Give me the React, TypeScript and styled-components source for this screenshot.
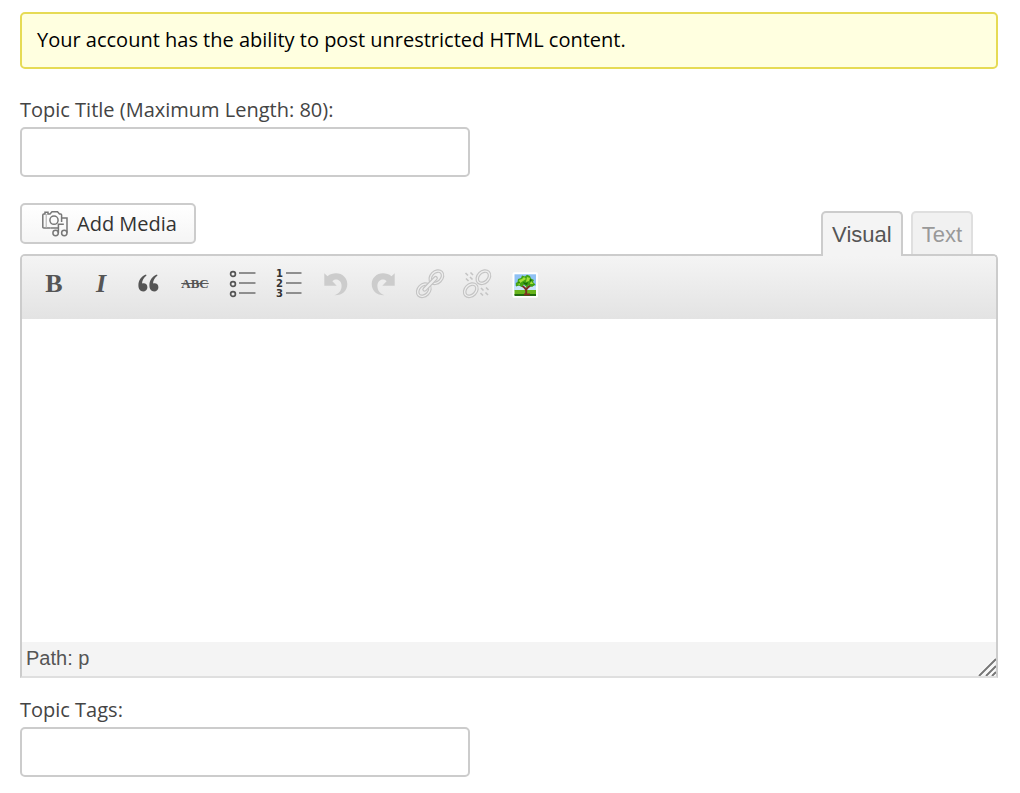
import React, { useState } from "react";
import styled, { createGlobalStyle, css } from "styled-components";

const GlobalStyle = createGlobalStyle`
  *, *::before, *::after { box-sizing: border-box; }
  body {
    margin: 0;
    background: #fff;
    color: #444;
    font-family: "Open Sans", "Noto Sans", sans-serif;
    font-size: 20px;
    line-height: 30px;
  }
`;

const Form = styled.form`
  padding: 12px 22px 16px 20px;
`;

const Notice = styled.p`
  margin: 0 0 26px;
  padding: 11px 15px 12px;
  border: 2px solid #e6db55;
  border-radius: 5px;
  background: #ffffe0;
  color: #000;
`;

const Field = styled.div`
  display: flex;
  flex-direction: column;
  align-items: flex-start;
  gap: 2px;
`;

const TextInput = styled.input`
  width: 46%;
  height: 50px;
  padding: 0 12px;
  border: 2px solid #ccc;
  border-radius: 5px;
  background: #fff;
  color: inherit;
  font: inherit;
`;

const EditorHeader = styled.div`
  display: flex;
  justify-content: space-between;
  align-items: flex-start;
  margin-top: 26px;
`;

const MediaButton = styled.button`
  display: flex;
  align-items: center;
  gap: 9px;
  height: 41px;
  margin-bottom: 10px;
  padding: 0 17px 0 20px;
  border: 2px solid #ccc;
  border-radius: 5px;
  background: linear-gradient(#fff, #f5f5f5);
  color: #333;
  font: inherit;
  cursor: pointer;
`;

const Tabs = styled.div`
  display: flex;
  align-self: flex-end;
  gap: 8px;
  padding-right: 25px;
`;

const Tab = styled.button<{ $active: boolean }>`
  height: 43px;
  padding: 2px 9px 0;
  border: 2px solid #dfdfdf;
  border-bottom: 0;
  border-radius: 5px 5px 0 0;
  background: #f1f1f1;
  color: #999;
  font: 22px/38px "Liberation Sans", Arial, sans-serif;
  cursor: pointer;
  ${(p) =>
    p.$active &&
    css`
      position: relative;
      z-index: 1;
      height: 45px;
      margin-bottom: -2px;
      padding-bottom: 2px;
      border-color: #ccc;
      background: #f4f4f4;
      color: #555;
    `}
`;

const Editor = styled.section`
  position: relative;
  margin-bottom: 17px;
  border: 2px solid #ccc;
  border-bottom-color: #dfdfdf;
  border-radius: 5px 5px 0 0;
`;

const Toolbar = styled.div`
  display: flex;
  gap: 7px;
  padding: 8px 12px 15px;
  border-radius: 3px 3px 0 0;
  background: linear-gradient(#f4f4f4, #e3e3e3);
`;

const ToolButton = styled.button`
  display: flex;
  align-items: center;
  justify-content: center;
  width: 40px;
  height: 40px;
  padding: 0;
  border: 0;
  background: none;
  color: #555;
  font: bold 26px/40px "Liberation Serif", "Times New Roman", serif;
  cursor: pointer;
  &:disabled { cursor: default; }
`;

const Italic = styled.em`
  font-style: italic;
`;

const Strike = styled.s`
  font-size: 13px;
`;

const Content = styled.textarea`
  display: block;
  width: 100%;
  height: 323px;
  padding: 16px;
  border: 0;
  outline: 0;
  resize: none;
  background: #fff;
  color: #333;
  font: inherit;
`;

const StatusBar = styled.div`
  padding: 0 4px 2px;
  background: #f4f4f4;
  color: #555;
  font: 20px/32px "Liberation Sans", Arial, sans-serif;
`;

const Grip = styled.svg`
  position: absolute;
  right: 0;
  bottom: 0;
  cursor: se-resize;
`;

const IconSvg = styled.svg`
  overflow: visible;
`;

const Icon = ({ children }: { children: React.ReactNode }) => (
  <IconSvg width="28" height="28" viewBox="0 0 28 28" fill="none" aria-hidden="true">
    {children}
  </IconSvg>
);

const MediaIcon = () => (
  <svg width="26" height="26" viewBox="0 0 26 26" fill="none" stroke="#777" strokeWidth="1.5" aria-hidden="true">
    <path d="M8.5 17H1.8Q.8 17 .8 16V4Q.8 3 1.8 3H3V1.2H6V3H8L10 .8H15.5L17.5 3H18.6Q19.6 3 19.6 4V11" />
    <path d="M4.2 3V17" strokeWidth="1" stroke="#aaa" />
    <circle cx="12" cy="9.2" r="4.1" />
    <path d="M19.6 7H25V21.8M16.4 22V13.2H21.8M8.5 17H16.4" />
    <circle cx="13.6" cy="22" r="2.7" />
    <circle cx="22.3" cy="22" r="2.7" />
  </svg>
);

const QuoteMark = "M11 3.5C6 5.5 3.4 9.4 3.4 14.2C3.4 18.2 5.3 20.4 8.1 20.4C10.6 20.4 12.4 18.7 12.4 16.2C12.4 13.8 10.8 12.2 8.6 12.2C7.9 12.2 7.4 12.3 7 12.5C7.2 9.5 8.6 6.5 11.5 4.4Z";

const QuoteIcon = () => (
  <Icon>
    <g fill="#555">
      <path d={QuoteMark} transform="translate(1 1)" />
      <path d={QuoteMark} transform="translate(12 1)" />
    </g>
  </Icon>
);

const rows = [3, 13, 23];

const BulletListIcon = () => (
  <Icon>
    {rows.map((y) => (
      <g key={y} stroke="#555">
        <circle cx="5" cy={y + 1} r="2.4" strokeWidth="1.7" />
        <path d={`M11 ${y}H27.5`} stroke="#777" strokeWidth="1.6" />
      </g>
    ))}
  </Icon>
);

const NumberListIcon = () => (
  <Icon>
    {rows.map((y, i) => (
      <g key={y}>
        <text x="1" y={y + 4} fill="#333" fontFamily="DejaVu Sans, sans-serif" fontWeight="bold" fontSize="10">
          {i + 1}
        </text>
        <path d={`M11 ${y}H26.5`} stroke="#777" strokeWidth="1.6" />
      </g>
    ))}
  </Icon>
);

const TurnArrow =
  "M2.3 3.3L5.5 6.2C8 4 11 3.2 14 3.2C20.5 3.2 25.3 8 25.3 14C25.3 21 20 25.5 12.5 25.2C17 23.5 19.6 20.5 19.6 16C19.6 12 17 9.6 14 9.6C12.5 9.6 11.3 10.2 10.4 11.2L14.7 15.7H2.3Z";

const UndoIcon = () => (
  <Icon>
    <path d={TurnArrow} fill="#ccc" />
  </Icon>
);

const RedoIcon = () => (
  <Icon>
    <path d={TurnArrow} fill="#ccc" transform="matrix(-1 0 0 1 28 0)" />
  </Icon>
);

const ChainRing = ({ x, y }: { x: number; y: number }) => (
  <g transform={`translate(${x} ${y}) rotate(-45)`}>
    <ellipse rx="7" ry="5.2" stroke="#c4c4c4" strokeWidth="3.6" />
    <ellipse rx="7" ry="5.2" stroke="#eee" strokeWidth="1.3" />
  </g>
);

const LinkIcon = () => (
  <Icon>
    <ChainRing x={7.8} y={20.2} />
    <ChainRing x={20.4} y={7.2} />
    <path d="M8.6 19.4L19.6 8.2" stroke="#c4c4c4" strokeWidth="4.6" strokeLinecap="round" />
    <path d="M8.6 19.4L19.6 8.2" stroke="#eee" strokeWidth="2.2" strokeLinecap="round" />
  </Icon>
);

const UnlinkIcon = () => (
  <Icon>
    <ChainRing x={7.8} y={20.2} />
    <ChainRing x={20.4} y={7.2} />
    <path
      d="M2.5 3L5 5.5M7.5 2.5L10 5M3 8.5L5.5 11M7 7L9.5 9.5M18 18L20.5 20.5M23 17.5L25.5 20M17.5 23L20 25.5M22.5 22.5L25 25"
      stroke="#c4c4c4"
      strokeWidth="1.6"
    />
  </Icon>
);

const PictureIcon = () => (
  <Icon>
    <rect x="2.5" y="2.3" width="25.4" height="25.4" rx="1.5" fill="#fff" />
    <rect x="4.5" y="4.3" width="21.5" height="16" fill="#8fc1f4" />
    <rect x="4.5" y="16" width="21.5" height="5" fill="#c9e3fb" />
    <rect x="4.5" y="20" width="21.5" height="5" fill="#69b51e" />
    <rect x="4.5" y="24" width="21.5" height="2" fill="#236b10" />
    <path d="M16 24.5C17 20 16 18 11.5 15.5M16 20C17 17 19 16 22 14.5M14 24.5H20" stroke="#7d2f22" strokeWidth="2" />
    <path
      d="M8 9L11 8L12 5.5L15 6.5L17 4.8L20 6L21 8.5L24 10L23 12L25.5 14.5L22 17L18.5 15L17 17.5L14 14.5L11.5 17L9 15.5L6 16.5L5.8 13L7.5 12Z"
      fill="#43a313"
    />
    <path d="M9 10L12 9L14 7L16 9L13 11L10 13ZM17 7L20 8L19 11L16 12ZM21 11L23.5 14L20 14ZM7 14L10 13.5L10 15Z" fill="#a5df3b" />
    <path d="M13 12L16 13L18 12L17 15L14 14ZM20 9L22 10L20 12ZM8 12L10 12L9 13Z" fill="#176b0c" />
  </Icon>
);

const tools: { label: string; icon: React.ReactNode; disabled?: boolean }[] = [
  { label: "Bold", icon: "B" },
  { label: "Italic", icon: <Italic>I</Italic> },
  { label: "Blockquote", icon: <QuoteIcon /> },
  { label: "Strikethrough", icon: <Strike>ABC</Strike> },
  { label: "Unordered list", icon: <BulletListIcon /> },
  { label: "Ordered list", icon: <NumberListIcon /> },
  { label: "Undo", icon: <UndoIcon />, disabled: true },
  { label: "Redo", icon: <RedoIcon />, disabled: true },
  { label: "Insert link", icon: <LinkIcon />, disabled: true },
  { label: "Unlink", icon: <UnlinkIcon />, disabled: true },
  { label: "Insert image", icon: <PictureIcon /> },
];

export default function App() {
  const [mode, setMode] = useState("Visual");

  return (
    <>
      <GlobalStyle />
      <Form onSubmit={(e) => e.preventDefault()}>
        <Notice>Your account has the ability to post unrestricted HTML content.</Notice>

        <Field>
          <label htmlFor="topic-title">Topic Title (Maximum Length: 80):</label>
          <TextInput id="topic-title" type="text" maxLength={80} />
        </Field>

        <EditorHeader>
          <MediaButton type="button">
            <MediaIcon />
            Add Media
          </MediaButton>
          <Tabs role="tablist">
            {["Visual", "Text"].map((name) => (
              <Tab
                key={name}
                type="button"
                role="tab"
                aria-selected={mode === name}
                $active={mode === name}
                onClick={() => setMode(name)}
              >
                {name}
              </Tab>
            ))}
          </Tabs>
        </EditorHeader>

        <Editor>
          <Toolbar role="toolbar" aria-label="Formatting">
            {tools.map((tool) => (
              <ToolButton key={tool.label} type="button" aria-label={tool.label} disabled={tool.disabled}>
                {tool.icon}
              </ToolButton>
            ))}
          </Toolbar>
          <Content aria-label="Topic content" />
          <StatusBar>Path: p</StatusBar>
          <Grip width="18" height="18" viewBox="0 0 18 18" aria-hidden="true">
            <path d="M1 18L18 1M8 18L18 8M14 18L18 14" stroke="#fff" strokeWidth="4" />
            <path d="M1 18L18 1M8 18L18 8M14 18L18 14" stroke="#777" strokeWidth="2" />
          </Grip>
        </Editor>

        <Field>
          <label htmlFor="topic-tags">Topic Tags:</label>
          <TextInput id="topic-tags" type="text" />
        </Field>
      </Form>
    </>
  );
}
